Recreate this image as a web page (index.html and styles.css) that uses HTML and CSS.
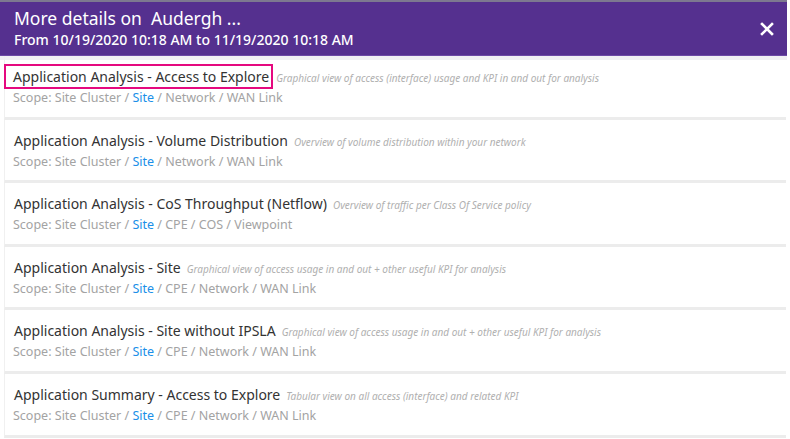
FILE: index.html
```html
<!DOCTYPE html>
<html>
<head>
<meta charset="utf-8">
<link rel="stylesheet" href="styles.css">
</head>
<body>
<div class="modal">
  <div class="header">
    <div class="titles">
      <div class="title">More details on&nbsp; Audergh ...</div>
      <div class="subtitle">From 10/19/2020 10:18 AM to 11/19/2020 10:18 AM</div>
    </div>
    <svg class="close" width="14" height="14" viewBox="0 0 14 14"><path d="M2 2L12 12M12 2L2 12" stroke="#fff" stroke-width="2.6" stroke-linecap="square"/></svg>
  </div>
  <div class="list">
    <div class="row">
      <div class="line1"><span class="name highlight">Application Analysis - Access to Explore</span><span class="desc">Graphical view of access (interface) usage and KPI in and out for analysis</span></div>
      <div class="scope">Scope: Site Cluster / <span class="link">Site</span> / Network / WAN Link</div>
    </div>
    <div class="row">
      <div class="line1"><span class="name">Application Analysis - Volume Distribution</span><span class="desc">Overview of volume distribution within your network</span></div>
      <div class="scope">Scope: Site Cluster / <span class="link">Site</span> / Network / WAN Link</div>
    </div>
    <div class="row">
      <div class="line1"><span class="name">Application Analysis - CoS Throughput (Netflow)</span><span class="desc">Overview of traffic per Class Of Service policy</span></div>
      <div class="scope">Scope: Site Cluster / <span class="link">Site</span> / CPE / COS / Viewpoint</div>
    </div>
    <div class="row">
      <div class="line1"><span class="name">Application Analysis - Site</span><span class="desc">Graphical view of access usage in and out + other useful KPI for analysis</span></div>
      <div class="scope">Scope: Site Cluster / <span class="link">Site</span> / CPE / Network / WAN Link</div>
    </div>
    <div class="row">
      <div class="line1"><span class="name">Application Analysis - Site without IPSLA</span><span class="desc">Graphical view of access usage in and out + other useful KPI for analysis</span></div>
      <div class="scope">Scope: Site Cluster / <span class="link">Site</span> / CPE / Network / WAN Link</div>
    </div>
    <div class="row">
      <div class="line1"><span class="name">Application Summary - Access to Explore</span><span class="desc">Tabular view on all access (interface) and related KPI</span></div>
      <div class="scope">Scope: Site Cluster / <span class="link">Site</span> / CPE / Network / WAN Link</div>
    </div>
  </div>
</div>
</body>
</html>
```
FILE: styles.css
```css
* { box-sizing: border-box; }
html, body { margin: 0; padding: 0; background: #fff; }
body { font-family: "Noto Sans", "DejaVu Sans", sans-serif; width: 790px; height: 439px; overflow: hidden; }
.modal { width: 790px; }
.header {
  width: 787px;
  height: 56px;
  background: #55308f;
  border-top: 2px solid #7d7890;
  border-bottom: 1px solid #6d4aa5;
  box-shadow: 0 4px 0 #f1f1f3;
  display: flex;
  align-items: center;
  justify-content: space-between;
  padding: 0 13px 0 14px;
  color: #fff;
}
.titles { display: flex; flex-direction: column; gap: 2px; margin-top: -2px; }
.title { font-size: 17.5px; line-height: 22px; }
.subtitle { font-size: 14px; line-height: 18px; font-weight: 500; }
.close { margin-top: 1px; }
.list { margin-left: 4px; width: 782px; }
.row {
  height: 63.6px;
  border-left: 1px solid #f0f0f0;
  border-bottom: 3px solid #ececec;
  padding: 10px 0 0 8px;
}
.line1 { display: flex; align-items: baseline; white-space: nowrap; height: 22px; }
.name { font-size: 14px; color: #333; padding: 1px 1px; }
.highlight { outline: 2px solid #e5097f; outline-offset: 0; margin-left: -7px; padding-left: 7px; padding-right: 2px; }
.desc { font-size: 10px; font-style: italic; color: #b0b0b0; margin-left: 5px; }
.scope { font-size: 12.5px; color: #a3a3a3; margin-top: 1px; }
.link { color: #1a8fe8; }
```
